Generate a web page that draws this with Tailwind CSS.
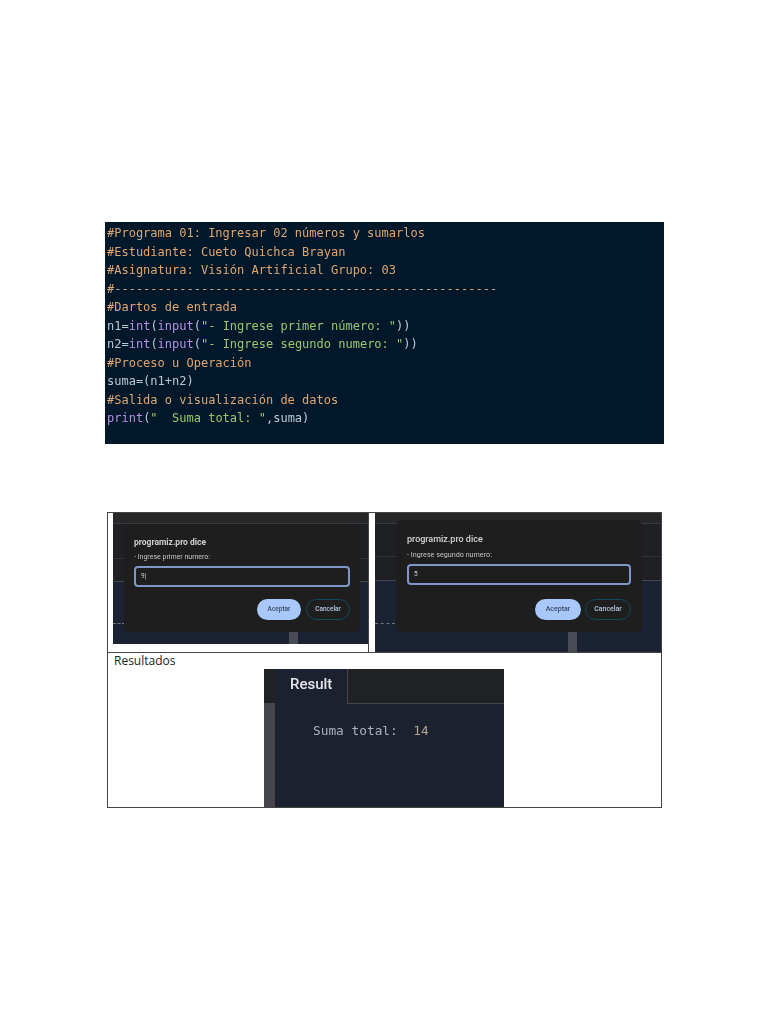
<!DOCTYPE html>
<html lang="en">
<head>
  <meta charset="UTF-8">
  <script src="https://cdn.jsdelivr.net/npm/@tailwindcss/browser@4"></script>
  <title>Programa 01</title>
</head>
<body class="bg-white">
  <main class="w-[768px] h-[1024px] pt-[222px] pl-[105px] overflow-hidden">

    <!-- code block -->
    <div class="w-[559px] h-[222px] pt-[2px] pl-[2px] bg-[#00182a] font-['DejaVu_Sans_Mono',monospace] text-[12px] leading-[18.5px] text-[#bcc8d2] blur-[0.4px]">
      <p class="text-[#e0a672]">#Programa 01: Ingresar 02 números y sumarlos</p>
      <p class="text-[#e0a672]">#Estudiante: Cueto Quichca Brayan</p>
      <p class="text-[#e0a672]">#Asignatura: Visión Artificial Grupo: 03</p>
      <p class="text-[#e0a672]">#-----------------------------------------------------</p>
      <p class="text-[#e0a672]">#Dartos de entrada</p>
      <p>n1=<span class="text-[#b98fe3]">int</span>(<span class="text-[#b98fe3]">input</span>(<span class="text-[#98c76f]">"- Ingrese primer número: "</span>))</p>
      <p>n2=<span class="text-[#b98fe3]">int</span>(<span class="text-[#b98fe3]">input</span>(<span class="text-[#98c76f]">"- Ingrese segundo numero: "</span>))</p>
      <p class="text-[#e0a672]">#Proceso u Operación</p>
      <p>suma=(n1+n2)</p>
      <p class="text-[#e0a672]">#Salida o visualización de datos</p>
      <p class="whitespace-pre"><span class="text-[#b98fe3]">print</span>(<span class="text-[#98c76f]">"  Suma total: "</span>,suma)</p>
    </div>

    <!-- table with captures -->
    <section class="w-[555px] h-[296px] mt-[68px] ml-[2px] border border-[#444] flex flex-col">
      <div class="h-[140px] flex border-b border-[#444]">

        <!-- first prompt -->
        <div class="w-[261px] pl-[5px] border-r border-[#444]">
          <div class="relative w-[255px] h-[131px] bg-[#1f2023] flex flex-col">
            <div class="h-[10px] bg-[#262728]"></div>
            <div class="h-[35px] border-t border-[#3a3b3e]"></div>
            <div class="h-[23px] border-t border-[#333437]"></div>
            <div class="flex-1 bg-[#1b2233] border-t border-[#44464c]"></div>
            <div class="absolute left-[176px] bottom-0 w-[9px] h-[12px] bg-[#4a4c55]"></div>
            <div class="absolute left-0 top-[110px] w-[12px] border-t border-dashed border-[#777]"></div>
            <div class="absolute left-[11px] top-[12px] w-[236px] h-[107px] rounded-[6px] bg-[#1e1e1f] pt-[11px] px-[10px] font-['Roboto',sans-serif] blur-[0.4px]">
              <p class="text-[8.5px] leading-[12px] font-bold text-[#d0d0d0]">programiz.pro dice</p>
              <p class="mt-[5px] text-[7px] leading-[9px] text-[#c4c4c4]">- Ingrese primer numero:</p>
              <div class="mt-[4px] h-[21px] w-[216px] rounded-[4px] border-2 border-[#7f97c4] pl-[5px] text-[6.5px] leading-[17px] text-[#d0d0d0]">9|</div>
              <div class="mt-[12px] w-[216px] flex justify-end gap-[5px] text-[6.5px] font-medium">
                <span class="w-[44px] h-[21px] rounded-full bg-[#a8c7fa] text-center leading-[21px] text-[#3b4a63]">Aceptar</span>
                <span class="w-[44px] h-[21px] rounded-full border border-[#114a5e] text-center leading-[19px] text-[#b8c8e0]">Cancelar</span>
              </div>
            </div>
          </div>
        </div>

        <!-- second prompt -->
        <div class="flex-1 pl-[6px]">
          <div class="relative w-[286px] h-[139px] bg-[#1f2023] flex flex-col">
            <div class="h-[10px] bg-[#262728]"></div>
            <div class="h-[33px] border-t border-[#3a3b3e]"></div>
            <div class="h-[24px] border-t border-[#333437]"></div>
            <div class="flex-1 bg-[#1b2233] border-t border-[#44464c]"></div>
            <div class="absolute left-[193px] bottom-0 w-[9px] h-[20px] bg-[#4a4c55]"></div>
            <div class="absolute left-0 top-[110px] w-[20px] border-t border-dashed border-[#777]"></div>
            <div class="absolute left-[21px] top-[7px] w-[246px] h-[112px] rounded-[6px] bg-[#1e1e1f] pt-[13px] px-[11px] font-['Roboto',sans-serif] blur-[0.4px]">
              <p class="text-[9px] leading-[12px] font-medium text-[#d6d6d6]">programiz.pro dice</p>
              <p class="mt-[5px] text-[7.2px] leading-[9px] text-[#c4c4c4]">- Ingrese segundo numero:</p>
              <div class="mt-[5px] h-[21px] w-[224px] rounded-[4px] border-2 border-[#7f97c4] pl-[5px] text-[6.5px] leading-[17px] text-[#d0d0d0]">5</div>
              <div class="mt-[14px] w-[224px] flex justify-end gap-[4px] text-[7px] font-medium">
                <span class="w-[46px] h-[21px] rounded-full bg-[#a8c7fa] text-center leading-[21px] text-[#3b4a63]">Aceptar</span>
                <span class="w-[46px] h-[21px] rounded-full border border-[#114a5e] text-center leading-[19px] text-[#b8c8e0]">Cancelar</span>
              </div>
            </div>
          </div>
        </div>
      </div>

      <!-- results -->
      <div class="flex-1 flex flex-col pl-[6px]">
        <p class="h-[16px] font-['Open_Sans',sans-serif] text-[12px] leading-[16px] text-[#222]">Resultados</p>
        <div class="ml-[150px] w-[240px] flex-1 flex bg-[#1c2130]">
          <div class="w-[11px] flex flex-col bg-[#45464e]">
            <div class="h-[34px] bg-[#202124]"></div>
          </div>
          <div class="flex-1 flex flex-col blur-[0.4px]">
            <div class="h-[35px] flex">
              <div class="w-[73px] pl-[15px] font-['Roboto',sans-serif] font-medium text-[15px] leading-[30px] text-[#e4e6ea] border-r border-[#44464c]">Result</div>
              <div class="flex-1 bg-[#202124] border-b border-[#44464c]"></div>
            </div>
            <p class="mt-[19px] pl-[38px] whitespace-pre font-['DejaVu_Sans_Mono',monospace] text-[12.8px] leading-[16px] text-[#a9b2bf]">Suma total:  <span class="text-[#b3a58a]">14</span></p>
          </div>
        </div>
      </div>
    </section>
  </main>
</body>
</html>
